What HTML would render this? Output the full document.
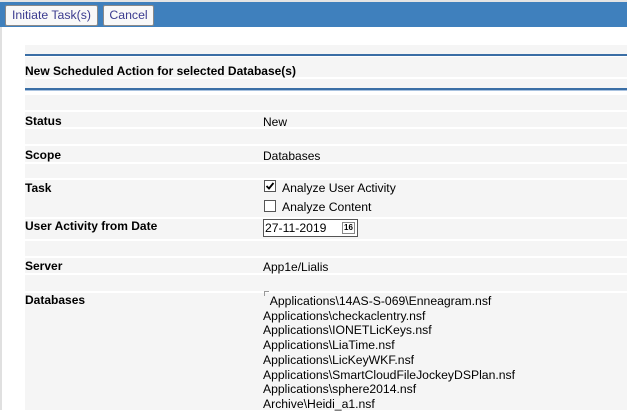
<!DOCTYPE html>
<html><head><style>
body{margin:0;width:627px;height:410px;overflow:hidden;background:#fff;font-family:"Liberation Sans",Arial,sans-serif;font-size:12px;color:#000;position:relative}
.bar{position:absolute;left:0;top:2px;width:627px;height:25px;background:#3f80bd}
.top{position:absolute;left:0;top:0;width:627px;height:2px;background:#e4e4e4}
.btn{position:absolute;top:5px;height:19px;background:#f8f8f8;border:1px solid #8a8a8a;border-radius:2px;color:#3b3b8f;font-size:12.3px;line-height:19px;text-align:center}
.lb{position:absolute;left:0;top:27px;width:2px;height:383px;background:#e0e0e0}
.r{position:absolute;left:25px;width:602px;background:#f5f5f5}
.bl{position:absolute;left:25px;width:602px;height:2px;background:#3a6ea5}
.bl2{position:absolute;left:25px;width:602px;height:1px;background:#a9c2df}
.t{position:absolute;font-size:12px;white-space:nowrap}
.b{font-weight:bold;left:25px}
.v{left:263px}
.cb{position:absolute;left:264px;width:10px;height:10px;border:1px solid #555;background:#fff}
</style></head><body>
<div class="top"></div>
<div class="bar"></div>
<div class="btn" style="left:5px;width:91px">Initiate Task(s)</div>
<div class="btn" style="left:103px;width:49px">Cancel</div>
<div class="lb"></div>
<div class="r" style="top:45px;height:9px"></div>
<div class="bl" style="top:54px"></div>
<div class="r" style="top:57px;height:20px"></div>
<div class="r" style="top:79px;height:9px"></div>
<div class="bl" style="top:88px"></div>
<div class="bl2" style="top:90px"></div>
<div class="r" style="top:95px;height:15px"></div>
<div class="r" style="top:112px;height:15px"></div>
<div class="r" style="top:129px;height:15px"></div>
<div class="r" style="top:146px;height:16px"></div>
<div class="r" style="top:164px;height:14px"></div>
<div class="r" style="top:180px;height:37px"></div>
<div class="r" style="top:219px;height:20px"></div>
<div class="r" style="top:241px;height:15px"></div>
<div class="r" style="top:258px;height:15px"></div>
<div class="r" style="top:275px;height:16px"></div>
<div class="r" style="top:293px;height:117px"></div>
<div class="t b" style="top:64px">New Scheduled Action for selected Database(s)</div>
<div class="t b" style="top:114px">Status</div><div class="t v" style="top:115px">New</div>
<div class="t b" style="top:148px">Scope</div><div class="t v" style="top:149px">Databases</div>
<div class="t b" style="top:181px">Task</div>
<div class="cb" style="top:180px"><svg width="10" height="10" style="position:absolute;left:0;top:0"><path d="M1.5 5 L4 7.5 L8.5 2" stroke="#000" stroke-width="1.8" fill="none"/></svg></div>
<div class="t" style="left:282px;top:181px;font-size:12.2px">Analyze User Activity</div>
<div class="cb" style="top:200px"></div>
<div class="t" style="left:282px;top:200px;font-size:12.2px">Analyze Content</div>
<div class="t b" style="top:219px">User Activity from Date</div>
<div style="position:absolute;left:263px;top:219px;width:93px;height:16px;border:1px solid #555;background:#fff"></div>
<div class="t" style="left:265px;top:221px;font-size:12.2px">27-11-2019</div>
<div style="position:absolute;left:342px;top:222px;width:11px;height:10px;border:1px solid #888;font-size:8px;line-height:10px;text-align:center;font-weight:bold">16</div>
<div class="t b" style="top:259px">Server</div><div class="t v" style="top:260px">App1e/Lialis</div>
<div class="t b" style="top:293px">Databases</div>
<div style="position:absolute;left:264px;top:291px;width:4px;height:4px;border-left:1px solid #999;border-top:1px solid #999"></div>
<div class="t" style="left:263px;top:294px;line-height:14.7px;font-size:12.2px">&nbsp;&nbsp;Applications\14AS-S-069\Enneagram.nsf<br>Applications\checkaclentry.nsf<br>Applications\IONETLicKeys.nsf<br>Applications\LiaTime.nsf<br>Applications\LicKeyWKF.nsf<br>Applications\SmartCloudFileJockeyDSPlan.nsf<br>Applications\sphere2014.nsf<br>Archive\Heidi_a1.nsf</div>
</body></html>
